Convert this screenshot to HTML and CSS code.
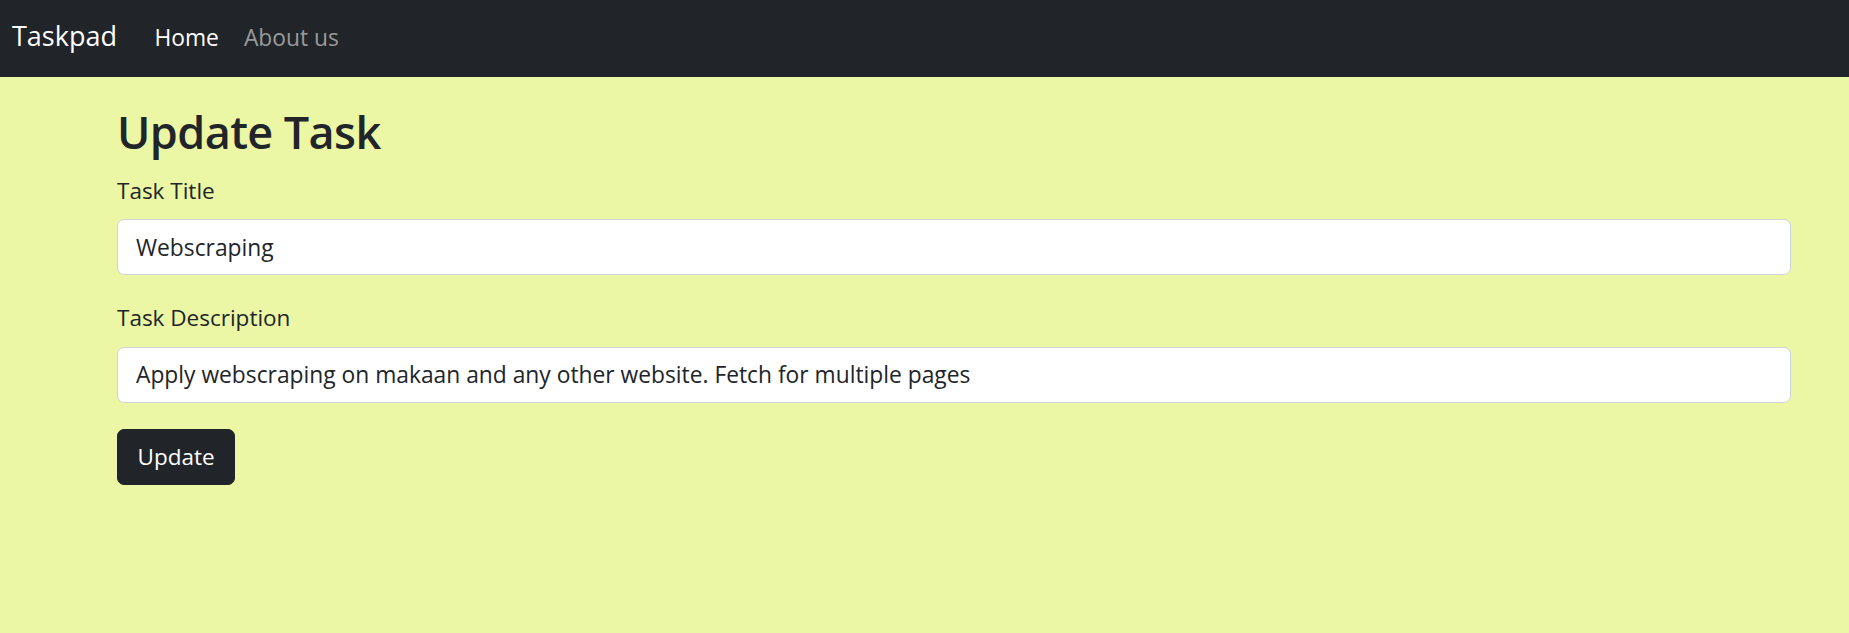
FILE: index.html
```html
<!DOCTYPE html>
<html lang="en">
<head>
<meta charset="utf-8">
<title>Taskpad - Update Task</title>
<link rel="stylesheet" href="styles.css">
</head>
<body>
<nav class="navbar">
  <a class="brand" href="#">Taskpad</a>
  <ul class="nav">
    <li><a class="nav-link active" href="#">Home</a></li>
    <li><a class="nav-link" href="#">About us</a></li>
  </ul>
</nav>
<main class="container">
  <h1 class="title">Update Task</h1>
  <form class="form">
    <div class="group">
      <label class="label" for="title">Task Title</label>
      <input class="field" id="title" type="text" value="Webscraping">
    </div>
    <div class="group">
      <label class="label" for="desc">Task Description</label>
      <input class="field" id="desc" type="text" value="Apply webscraping on makaan and any other website. Fetch for multiple pages">
    </div>
    <button class="btn" type="button">Update</button>
  </form>
</main>
</body>
</html>
```

FILE: styles.css
```css
* { box-sizing: border-box; }
html, body {
  margin: 0;
  padding: 0;
}
body {
  background: #ebf7a4;
  color: #212529;
  font-family: "Open Sans", "Noto Sans", sans-serif;
  font-size: 22.5px;
  line-height: 1.5;
  min-height: 633px;
}
.navbar {
  background: #212529;
  height: 77px;
  padding: 16px 12px 0;
  display: flex;
  align-items: baseline;
}
.brand {
  color: #fff;
  text-decoration: none;
  font-size: 27px;
  line-height: 1.5;
  margin-right: 25px;
}
.nav {
  list-style: none;
  margin: 0;
  padding: 0;
  display: flex;
}
.nav-link {
  display: block;
  padding: 0 12.5px;
  color: rgba(255, 255, 255, 0.55);
  text-decoration: none;
  font-size: 22.8px;
  line-height: 1.5;
}
.nav-link.active { color: #fff; }
.container {
  margin: 0 58px 0 117px;
  padding-top: 27px;
}
.title {
  margin: 0 0 13.5px;
  font-size: 45px;
  font-weight: 600;
  line-height: 56.5px;
  letter-spacing: -0.6px;
}
.group { margin-bottom: 26px; }
.label {
  display: block;
  margin-bottom: 11.5px;
}
.field {
  display: block;
  width: 100%;
  height: 56px;
  padding: 0 18px;
  font-family: "Open Sans", "Noto Sans", sans-serif;
  font-size: 22.8px;
  line-height: 1.5;
  color: #212529;
  background: #fff;
  border: 1px solid #ced4da;
  border-radius: 7px;
  outline: none;
}
.btn {
  display: block;
  height: 56px;
  padding: 0 19.5px;
  font-family: "Open Sans", "Noto Sans", sans-serif;
  font-size: 22.5px;
  line-height: 1.5;
  color: #fff;
  background: #212529;
  border: 1px solid #212529;
  border-radius: 7px;
  cursor: pointer;
}
```
